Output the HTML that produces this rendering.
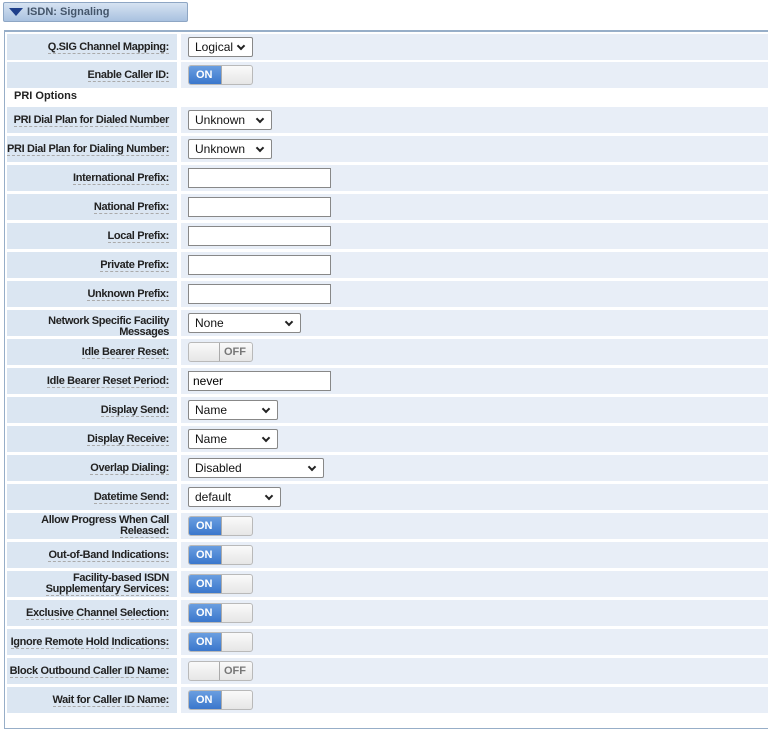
<!DOCTYPE html>
<html><head><style>
body{margin:0;width:768px;height:730px;background:#fff;font-family:"Liberation Sans",sans-serif;position:relative;overflow:hidden}
.hdr{position:absolute;left:3px;top:2px;width:183px;height:18px;border:1px solid #8ea6c4;border-radius:2px;background:linear-gradient(#d6e3f2,#a9c1e0);font-size:11px;font-weight:bold;color:#44556a;line-height:18px}
.hdr .tri{position:absolute;left:5px;top:5px;width:0;height:0;border-left:7px solid transparent;border-right:7px solid transparent;border-top:8px solid #1f3f8a}
.hdr span{position:absolute;left:23px}
.box{position:absolute;left:4px;top:30px;width:780px;height:696px;border:1px solid #97aec8;border-top:2px solid #97aec8}
.lab{position:absolute;left:7px;width:170px;height:26px;background:#dbe6f2;font-size:11px;font-weight:bold;color:#222;text-align:right;box-sizing:border-box;padding-right:8px;white-space:nowrap;letter-spacing:-0.35px}
.lab span{border-bottom:1px dashed #aaa}
.val{position:absolute;left:181px;width:600px;height:26px;background:#e8eef7}
.sel{position:absolute;left:7px;top:3px;height:20px;border:1px solid #888;border-radius:2px;background:#fff;font-size:12px;line-height:19px;box-sizing:border-box;padding-left:6px;color:#111}
.sel:after{content:"";position:absolute;right:8px;top:5px;width:4px;height:4px;border-right:2px solid #222;border-bottom:2px solid #222;transform:rotate(45deg)}
.inp{position:absolute;left:7px;top:3px;width:143px;height:20px;border:1px solid #888;background:#fff;font-size:12px;line-height:19px;box-sizing:border-box;padding-left:4px}
.tg{position:absolute;left:7px;top:3px;width:65px;height:20px;border:1px solid #b9b9b9;border-radius:3px;background:linear-gradient(#fafafa,#e6e6e6);box-sizing:border-box;overflow:hidden;font-size:11px;font-weight:bold;line-height:18px}
.tg.on .o{position:absolute;left:0;top:0;width:32px;height:18px;background:linear-gradient(#6a9ee0,#3a77cc);color:#fff;padding-left:7px;box-sizing:border-box}
.tg.on .k{position:absolute;left:32px;top:0;width:31px;height:18px;border-left:1px solid #aaa}
.tg.off .k{position:absolute;left:0;top:0;width:30px;height:18px;border-right:1px solid #aaa}
.tg.off .o{position:absolute;left:35px;top:0;color:#777}
.pri{position:absolute;left:14px;top:90px;font-size:11px;font-weight:bold;color:#222}
.two{line-height:11px;padding-top:2px}
</style></head><body>
<div class="hdr"><div class="tri"></div><span>ISDN: Signaling</span></div>
<div class="box"></div>
<div class="pri">PRI Options</div>

<div class="lab" style="top:34px;line-height:26px"><span>Q.SIG Channel Mapping:</span></div>
<div class="val" style="top:34px"><div class="sel" style="width:65px">Logical</div></div>
<div class="lab" style="top:62px;line-height:26px"><span>Enable Caller ID:</span></div>
<div class="val" style="top:62px"><div class="tg on"><div class="o">ON</div><div class="k"></div></div></div>

<div class="lab" style="top:107px;line-height:26px"><span>PRI Dial Plan for Dialed Number</span></div>
<div class="val" style="top:107px"><div class="sel" style="width:84px">Unknown</div></div>
<div class="lab" style="top:136px;line-height:26px"><span>PRI Dial Plan for Dialing Number:</span></div>
<div class="val" style="top:136px"><div class="sel" style="width:84px">Unknown</div></div>
<div class="lab" style="top:165px;line-height:26px"><span>International Prefix:</span></div>
<div class="val" style="top:165px"><div class="inp"></div></div>
<div class="lab" style="top:194px;line-height:26px"><span>National Prefix:</span></div>
<div class="val" style="top:194px"><div class="inp"></div></div>
<div class="lab" style="top:223px;line-height:26px"><span>Local Prefix:</span></div>
<div class="val" style="top:223px"><div class="inp"></div></div>
<div class="lab" style="top:252px;line-height:26px"><span>Private Prefix:</span></div>
<div class="val" style="top:252px"><div class="inp"></div></div>
<div class="lab" style="top:281px;line-height:26px"><span>Unknown Prefix:</span></div>
<div class="val" style="top:281px"><div class="inp"></div></div>
<div class="lab two" style="top:310px;padding-top:6px"><span style="border:0">Network Specific Facility<br>Messages</span></div>
<div class="val" style="top:310px"><div class="sel" style="width:113px">None</div></div>
<div class="lab" style="top:339px;line-height:26px"><span>Idle Bearer Reset:</span></div>
<div class="val" style="top:339px"><div class="tg off"><div class="k"></div><div class="o">OFF</div></div></div>
<div class="lab" style="top:368px;line-height:26px"><span>Idle Bearer Reset Period:</span></div>
<div class="val" style="top:368px"><div class="inp">never</div></div>
<div class="lab" style="top:397px;line-height:26px"><span>Display Send:</span></div>
<div class="val" style="top:397px"><div class="sel" style="width:90px">Name</div></div>
<div class="lab" style="top:426px;line-height:26px"><span>Display Receive:</span></div>
<div class="val" style="top:426px"><div class="sel" style="width:90px">Name</div></div>
<div class="lab" style="top:455px;line-height:26px"><span>Overlap Dialing:</span></div>
<div class="val" style="top:455px"><div class="sel" style="width:136px">Disabled</div></div>
<div class="lab" style="top:484px;line-height:26px"><span>Datetime Send:</span></div>
<div class="val" style="top:484px"><div class="sel" style="width:93px">default</div></div>
<div class="lab two" style="top:513px"><span style="border:0">Allow Progress When Call<br><span>Released:</span></span></div>
<div class="val" style="top:513px"><div class="tg on"><div class="o">ON</div><div class="k"></div></div></div>
<div class="lab" style="top:542px;line-height:26px"><span>Out-of-Band Indications:</span></div>
<div class="val" style="top:542px"><div class="tg on"><div class="o">ON</div><div class="k"></div></div></div>
<div class="lab two" style="top:571px"><span style="border:0">Facility-based ISDN<br><span>Supplementary Services:</span></span></div>
<div class="val" style="top:571px"><div class="tg on"><div class="o">ON</div><div class="k"></div></div></div>
<div class="lab" style="top:600px;line-height:26px"><span>Exclusive Channel Selection:</span></div>
<div class="val" style="top:600px"><div class="tg on"><div class="o">ON</div><div class="k"></div></div></div>
<div class="lab" style="top:629px;line-height:26px"><span>Ignore Remote Hold Indications:</span></div>
<div class="val" style="top:629px"><div class="tg on"><div class="o">ON</div><div class="k"></div></div></div>
<div class="lab" style="top:658px;line-height:26px"><span>Block Outbound Caller ID Name:</span></div>
<div class="val" style="top:658px"><div class="tg off"><div class="k"></div><div class="o">OFF</div></div></div>
<div class="lab" style="top:687px;line-height:26px"><span>Wait for Caller ID Name:</span></div>
<div class="val" style="top:687px"><div class="tg on"><div class="o">ON</div><div class="k"></div></div></div>
</body></html>
